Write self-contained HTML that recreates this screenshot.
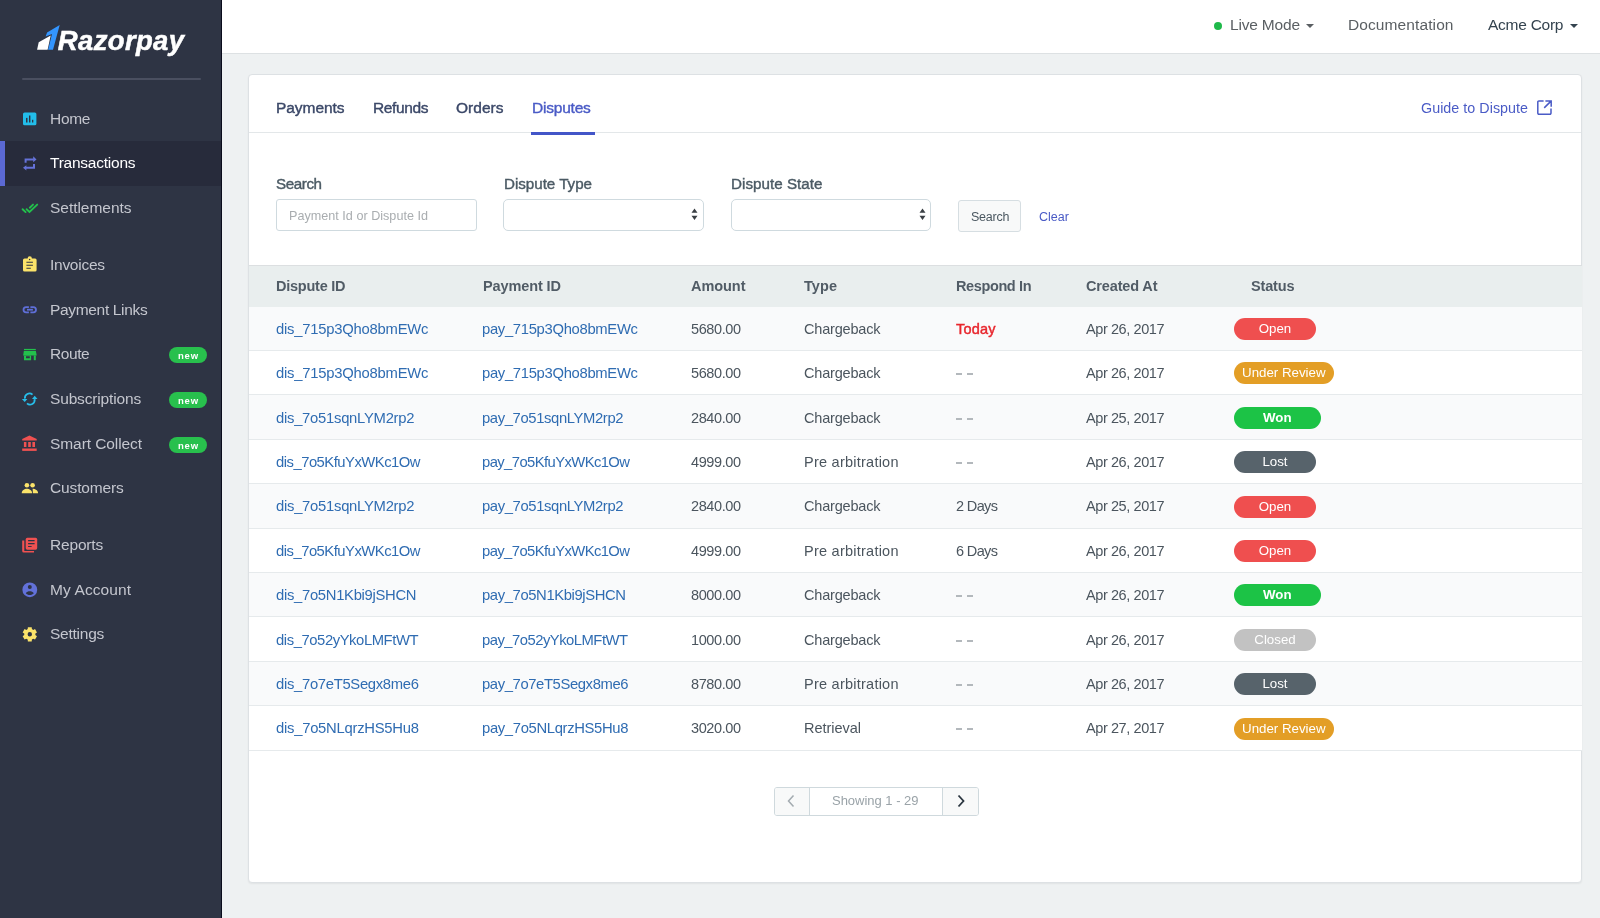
<!DOCTYPE html>
<html><head><meta charset="utf-8">
<style>
*{margin:0;padding:0;box-sizing:border-box}
html,body{width:1600px;height:918px;overflow:hidden}
body{background:#eef1f2;font-family:"Liberation Sans",sans-serif;position:relative}
.a{position:absolute;white-space:nowrap;line-height:normal;will-change:transform}
#side{position:absolute;left:0;top:0;width:222px;height:918px;background:#2e3444;border-right:1px solid #0a0c1c}
.logo{position:absolute;left:0;top:0}
.sep{position:absolute;left:22px;top:78px;width:179px;height:2px;border-radius:1px;background:#4a4f60}
.act{position:absolute;left:0;top:140.8px;width:221px;height:45px;background:#272b3b}
.actb{position:absolute;left:0;top:140.8px;width:5px;height:45px;background:#5b69d3}
.si{color:#c4c6ce}
.new{will-change:transform;position:absolute;left:169px;width:38px;height:16.2px;border-radius:8.1px;background:#28c04d;color:#fff;font-size:9.5px;font-weight:700;letter-spacing:0.8px;text-indent:0.8px;text-align:center;line-height:18.5px}
#head{position:absolute;left:222px;top:0;width:1378px;height:54px;background:#fff;border-bottom:1px solid #dde1e3}
.hd{color:#5a5f63}
.dot{position:absolute;left:1213.5px;top:21.7px;width:8.6px;height:8.6px;border-radius:50%;background:#1fb94a}
.caret{position:absolute;width:0;height:0;border-left:4px solid transparent;border-right:4px solid transparent;border-top:4.5px solid #5a5f63}
.card{position:absolute;left:248px;top:73.5px;width:1334px;height:809.5px;background:#fff;border:1px solid #dde1e4;border-radius:4px;box-shadow:0 1px 2px rgba(0,0,0,0.06)}
.tabline{position:absolute;left:249px;top:132px;width:1332px;height:1px;background:#e3e7e9}
.uline{position:absolute;left:531px;top:132px;width:64px;height:3px;background:#4356c8}
.tab{color:#3b4868;-webkit-text-stroke:0.4px currentColor}
.guide{color:#4a5bc6}
.lbl{color:#4b5a64;-webkit-text-stroke:0.4px currentColor}
.inp{position:absolute;top:198.5px;height:32.5px;border:1px solid #cfdadf;border-radius:3px;background:#fff}
.ph{color:#a9adb0}
.btn{position:absolute;left:958px;top:199.5px;width:63px;height:32px;border:1px solid #d6dee2;border-radius:3px;background:#f8f9f9}
.btxt{color:#4b5861}
.clr{color:#4a5bc6}
.thead{position:absolute;left:249px;top:265px;width:1333px;height:41.6px;background:#e9eeee;border-top:1px solid #dcdfe1}
.th{color:#515c66;font-weight:700}
.row{position:absolute;left:249px;width:1333px;height:44.4px;border-bottom:1px solid #e6eaec}
.lnk{color:#2f6cb2}
.txt{color:#4b555e}
.dash{position:absolute;width:6px;height:2px;background:#b3b8bc}
.badge{will-change:transform;position:absolute;left:1233.5px;height:21.8px;border-radius:11px;color:#fff;font-size:13.3px;text-align:center;line-height:22px}
.pag{position:absolute;left:773.5px;top:787px;width:205px;height:28.5px;border:1px solid #cfd9dd;border-radius:3px;background:#fff;overflow:hidden}
.pl{position:absolute;left:0;top:0;width:35px;height:100%;background:#f8f9f9;border-right:1px solid #cfd9dd}
.pr{position:absolute;right:0;top:0;width:35.5px;height:100%;background:#f8f9f9;border-left:1px solid #cfd9dd}
.pgt{color:#9aa3a8}
</style></head><body>
<div id="side">
<svg class="logo" style="will-change:transform" width="222" height="70" viewBox="0 0 222 70">
<polygon points="37.1,49.8 38.7,42.3 50.7,35.4 47.6,49.8" fill="#fff"/>
<polygon points="45.6,36.4 47.1,32.5 59.7,25.1 53,49.8 48.1,49.8 52,34.1" fill="#3395ff"/>
<text x="57.8" y="49.5" font-family="Liberation Sans" font-size="27.5" font-weight="700" font-style="italic" letter-spacing="0.35" fill="#fff" stroke="#fff" stroke-width="0.5">Razorpay</text>
</svg>
<div class="sep"></div>
<div class="act"></div><div class="actb"></div>
<div class="a si" style="left:50px;top:110.00px;font-size:15.5px;letter-spacing:-0.286px;">Home</div>
<div class="a si" style="left:50px;top:154.00px;font-size:15.5px;color:#fff;letter-spacing:-0.241px;">Transactions</div>
<div class="a si" style="left:50px;top:199.00px;font-size:15.5px;letter-spacing:-0.036px;">Settlements</div>
<div class="a si" style="left:50px;top:256.00px;font-size:15.5px;letter-spacing:-0.268px;">Invoices</div>
<div class="a si" style="left:50px;top:301.00px;font-size:15.5px;letter-spacing:-0.331px;">Payment Links</div>
<div class="a si" style="left:50px;top:345.00px;font-size:15.5px;letter-spacing:-0.419px;">Route</div>
<div class="a si" style="left:50px;top:390.00px;font-size:15.5px;letter-spacing:-0.154px;">Subscriptions</div>
<div class="a si" style="left:50px;top:435.00px;font-size:15.5px;letter-spacing:-0.078px;">Smart Collect</div>
<div class="a si" style="left:50px;top:479.00px;font-size:15.5px;letter-spacing:-0.142px;">Customers</div>
<div class="a si" style="left:50px;top:536.00px;font-size:15.5px;letter-spacing:-0.180px;">Reports</div>
<div class="a si" style="left:50px;top:581.00px;font-size:15.5px;letter-spacing:0.108px;">My Account</div>
<div class="a si" style="left:50px;top:625.00px;font-size:15.5px;letter-spacing:-0.245px;">Settings</div>
<div class="new" style="top:346.7px">new</div>
<div class="new" style="top:391.7px">new</div>
<div class="new" style="top:436.5px">new</div>
<svg class="a" style="left:0;top:0" width="222" height="700" viewBox="0 0 222 700">
<!-- home -->
<rect x="23" y="112.4" width="13.4" height="12.9" rx="1.6" fill="#22bdea"/>
<rect x="26" y="117.9" width="1.5" height="4.6" fill="#2e3444"/>
<rect x="29" y="115.5" width="1.4" height="7" fill="#2e3444"/>
<rect x="32" y="119.8" width="1.3" height="2.7" fill="#2e3444"/>
<!-- transactions -->
<g fill="none" stroke="#6572d8" stroke-width="2">
<path d="M25.6 162.8V159.4H33.8"/>
<path d="M34 164V167.8H25.6"/>
</g>
<path d="M33.2 156.3L36.5 159.4L33.2 162.3Z" fill="#6572d8"/>
<path d="M26.4 165.2L23 167.8L26.4 170.5Z" fill="#6572d8"/>
<!-- settlements -->
<g fill="none" stroke="#23c04c" stroke-width="1.9" stroke-linecap="round">
<path d="M22.6 209.2L25.6 212.1"/>
<path d="M26.6 209.2L29.5 212L37.2 204.6"/>
<path d="M29.8 207.7L33 204.6"/>
</g>
<!-- invoices -->
<path d="M24.5 258.4H27.6A2 2 0 0 1 31.9 258.4H35.1A1.5 1.5 0 0 1 36.6 259.9V270.1A1.5 1.5 0 0 1 35.1 271.6H24.5A1.5 1.5 0 0 1 23 270.1V259.9A1.5 1.5 0 0 1 24.5 258.4Z" fill="#fbe36a"/>
<circle cx="29.6" cy="259.5" r="0.75" fill="#2e3444"/>
<g stroke="#2e3444" stroke-width="1.1"><path d="M26.4 262.3H32.9M26.4 265.3H32.9M26.4 268.3H30.8"/></g>
<!-- payment links -->
<g fill="none" stroke="#5f6fd8" stroke-width="1.8">
<path d="M28.9 307.1H26.1A2.6 2.6 0 0 0 26.1 312.3H28.9"/>
<path d="M30.4 307.1H33.4A2.6 2.6 0 0 1 33.4 312.3H30.4"/>
<path d="M27 309.7H32.9"/>
</g>
<!-- route -->
<rect x="24" y="348.9" width="11.8" height="1.3" fill="#23c04c"/>
<path d="M23.9 351H35.9L36.7 355.6H23.1Z" fill="#23c04c"/>
<path d="M24 355.4H31.1V360.2H24ZM26 356.2V358.3H29.8V356.2Z" fill="#23c04c" fill-rule="evenodd"/>
<rect x="33.8" y="355.4" width="2" height="4.8" fill="#23c04c"/>
<!-- subscriptions -->
<g fill="none" stroke="#27bde9" stroke-width="1.8">
<path d="M32.5 394.6A4.6 4.6 0 0 0 24.9 398.6"/>
<path d="M27 403.4A4.6 4.6 0 0 0 34.6 399.2"/>
</g>
<path d="M21.9 398.9H27.4L24.7 401.9Z" fill="#27bde9"/>
<path d="M32 398.9H37.5L34.7 395.8Z" fill="#27bde9"/>
<!-- smart collect -->
<path d="M22.2 440.5V439.1L29.4 435.6L36.7 439.1V440.5Z" fill="#f05151"/>
<rect x="23.9" y="442" width="2.5" height="5" fill="#f05151"/>
<rect x="28.2" y="442" width="2.6" height="5" fill="#f05151"/>
<rect x="32.4" y="442" width="2.6" height="5" fill="#f05151"/>
<rect x="22.2" y="448.5" width="14.5" height="2.4" fill="#f05151"/>
<!-- customers -->
<circle cx="26.9" cy="485.3" r="2.3" fill="#fbe36a"/>
<circle cx="32.6" cy="485.3" r="2.3" fill="#fbe36a"/>
<path d="M21.7 493.2C21.7 490.5 24.5 488.8 26.9 488.8C29.3 488.8 32.1 490.5 32.1 493.2Z" fill="#fbe36a"/>
<path d="M32.6 488.8C35.3 488.8 38.1 490.5 38.1 493.2H32.9C32.9 491.6 32.6 490 32.6 488.8Z" fill="#fbe36a"/>
<!-- reports -->
<rect x="25.7" y="537.8" width="11.5" height="11.9" rx="1.6" fill="#f05151"/>
<g stroke="#2e3444" stroke-width="1.1"><path d="M28.1 540.6H34.6M28.1 543.6H34.6M28.1 546.5H31.6"/></g>
<path d="M22.2 540.6H24.3V550.9H34V552.5H23.7A1.5 1.5 0 0 1 22.2 551Z" fill="#f05151"/>
<!-- my account -->
<path d="M29.8 582.4A7.4 7.4 0 1 1 29.8 597.2A7.4 7.4 0 1 1 29.8 582.4ZM29.8 584.9A2 2 0 1 0 29.8 588.9A2 2 0 1 0 29.8 584.9ZM25.8 593.2C26.8 594.4 28.2 595.0 29.8 595.0C31.4 595.0 32.8 594.4 33.8 593.2C32.8 591.8 31.4 591.2 29.8 591.2C28.2 591.2 26.8 591.8 25.8 593.2Z" fill="#6271d9" fill-rule="evenodd"/>
<!-- settings -->
<path fill="#fbe36a" fill-rule="evenodd" d="M27.70 629.11 L27.88 627.15 L31.72 627.15 L31.90 629.11 L33.25 629.89 L35.03 629.07 L36.95 632.38 L35.35 633.52 L35.35 635.08 L36.95 636.22 L35.03 639.53 L33.25 638.71 L31.90 639.49 L31.72 641.45 L27.88 641.45 L27.70 639.49 L26.35 638.71 L24.57 639.53 L22.65 636.22 L24.25 635.08 L24.25 633.52 L22.65 632.38 L24.57 629.07 L26.35 629.89Z M29.8 632.0999999999999 A2.2 2.2 0 1 0 29.8 636.5 A2.2 2.2 0 1 0 29.8 632.0999999999999Z"/>
</svg>
</div>
<div id="head"></div>
<div class="dot"></div>
<div class="a hd" style="left:1229.8px;top:16.00px;font-size:15.5px;letter-spacing:-0.189px;">Live Mode</div>
<div class="caret" style="left:1306px;top:24px"></div>
<div class="a hd" style="left:1348.3px;top:16.00px;font-size:15.5px;letter-spacing:0.103px;">Documentation</div>
<div class="a hd" style="left:1487.5px;top:16.00px;font-size:15.5px;color:#34434f;letter-spacing:-0.254px;">Acme Corp</div>
<div class="caret" style="left:1569.5px;top:24px;border-top-color:#34434f"></div>
<div class="card"></div>
<div class="tabline"></div>
<div class="a tab" style="left:276.25px;top:99.00px;font-size:15.5px;letter-spacing:-0.060px;">Payments</div>
<div class="a tab" style="left:372.5px;top:99.00px;font-size:15.5px;letter-spacing:-0.372px;">Refunds</div>
<div class="a tab" style="left:455.75px;top:99.00px;font-size:15.5px;letter-spacing:0.025px;">Orders</div>
<div class="a tab" style="left:532px;top:99.00px;font-size:15.5px;color:#4a5bc6;letter-spacing:-0.216px;">Disputes</div>
<div class="uline"></div>
<div class="a guide" style="left:1421px;top:100.00px;font-size:14.3px;letter-spacing:0.033px;">Guide to Dispute</div>
<svg class="a" style="left:1536px;top:99px" width="17" height="17" viewBox="0 0 17 17"><path d="M7.6 2H2.9A1.1 1.1 0 0 0 1.8 3.1V14.1A1.1 1.1 0 0 0 2.9 15.2H13.9A1.1 1.1 0 0 0 15 14.1V9.4" fill="none" stroke="#4a5bc6" stroke-width="1.5"/><path d="M9.4 1.9H15.2V7.7M15 2.1L8.2 8.9" fill="none" stroke="#4a5bc6" stroke-width="1.5"/></svg>
<div class="a lbl" style="left:276.2px;top:175.00px;font-size:15.2px;letter-spacing:-0.425px;">Search</div>
<div class="a lbl" style="left:504.25px;top:175.00px;font-size:15.2px;letter-spacing:-0.034px;">Dispute Type</div>
<div class="a lbl" style="left:731px;top:175.00px;font-size:15.2px;letter-spacing:0.026px;">Dispute State</div>
<div class="inp" style="left:275.5px;width:201px"></div>
<div class="a ph" style="left:288.5px;top:209.00px;font-size:12.6px;letter-spacing:0.017px;">Payment Id or Dispute Id</div>
<div class="inp" style="left:503px;width:201px;border-radius:5px"></div>
<div class="inp" style="left:730.5px;width:200.5px;border-radius:5px"></div>
<svg class="a" style="left:691px;top:207.5px" width="7" height="13" viewBox="0 0 7 13"><path d="M3.5 0.5L6.5 4.8H0.5Z M3.5 12L6.5 7.7H0.5Z" fill="#3a3f44"/></svg>
<svg class="a" style="left:918.5px;top:207.5px" width="7" height="13" viewBox="0 0 7 13"><path d="M3.5 0.5L6.5 4.8H0.5Z M3.5 12L6.5 7.7H0.5Z" fill="#3a3f44"/></svg>
<div class="btn"></div>
<div class="a btxt" style="left:970.7px;top:210.00px;font-size:12.5px;letter-spacing:-0.222px;">Search</div>
<div class="a clr" style="left:1038.7px;top:210.00px;font-size:12.5px;letter-spacing:0.031px;">Clear</div>
<div class="thead"></div>
<div class="a th" style="left:276.3px;top:278.00px;font-size:14.5px;letter-spacing:-0.245px;">Dispute ID</div>
<div class="a th" style="left:483px;top:278.00px;font-size:14.5px;letter-spacing:-0.109px;">Payment ID</div>
<div class="a th" style="left:691.25px;top:278.00px;font-size:14.5px;letter-spacing:-0.053px;">Amount</div>
<div class="a th" style="left:803.75px;top:278.00px;font-size:14.5px;letter-spacing:0.073px;">Type</div>
<div class="a th" style="left:956.25px;top:278.00px;font-size:14.5px;letter-spacing:-0.384px;">Respond In</div>
<div class="a th" style="left:1086.25px;top:278.00px;font-size:14.5px;letter-spacing:-0.144px;">Created At</div>
<div class="a th" style="left:1250.75px;top:278.00px;font-size:14.5px;letter-spacing:-0.166px;">Status</div>
<div class="row" style="top:306.60px;background:#f9fafb"></div>
<div class="a lnk" style="left:275.5px;top:321.00px;font-size:14.8px;letter-spacing:-0.222px;">dis_715p3Qho8bmEWc</div>
<div class="a lnk" style="left:482px;top:321.00px;font-size:14.8px;letter-spacing:-0.308px;">pay_715p3Qho8bmEWc</div>
<div class="a txt" style="left:691.25px;top:321.00px;font-size:14.5px;letter-spacing:-0.404px;">5680.00</div>
<div class="a txt" style="left:803.75px;top:321.00px;font-size:14.5px;letter-spacing:-0.188px;">Chargeback</div>
<div class="a txt" style="left:956.25px;top:321.00px;font-size:14.5px;color:#e8262d;-webkit-text-stroke:0.45px currentColor;letter-spacing:0.199px;">Today</div>
<div class="a txt" style="left:1085.6px;top:321.00px;font-size:14.5px;letter-spacing:-0.413px;">Apr 26, 2017</div>
<div class="badge" style="top:317.90px;width:82px;background:#ef4f4f;">Open</div>
<div class="row" style="top:351.00px;background:#fff"></div>
<div class="a lnk" style="left:275.5px;top:365.00px;font-size:14.8px;letter-spacing:-0.222px;">dis_715p3Qho8bmEWc</div>
<div class="a lnk" style="left:482px;top:365.00px;font-size:14.8px;letter-spacing:-0.308px;">pay_715p3Qho8bmEWc</div>
<div class="a txt" style="left:691.25px;top:365.00px;font-size:14.5px;letter-spacing:-0.404px;">5680.00</div>
<div class="a txt" style="left:803.75px;top:365.00px;font-size:14.5px;letter-spacing:-0.188px;">Chargeback</div>
<div class="dash" style="left:956px;top:373px"></div><div class="dash" style="left:967px;top:373px"></div>
<div class="a txt" style="left:1085.6px;top:365.00px;font-size:14.5px;letter-spacing:-0.413px;">Apr 26, 2017</div>
<div class="badge" style="top:362.30px;width:99.6px;background:#e39e26;">Under Review</div>
<div class="row" style="top:395.40px;background:#f9fafb"></div>
<div class="a lnk" style="left:275.5px;top:410.00px;font-size:14.8px;letter-spacing:-0.257px;">dis_7o51sqnLYM2rp2</div>
<div class="a lnk" style="left:482px;top:410.00px;font-size:14.8px;letter-spacing:-0.371px;">pay_7o51sqnLYM2rp2</div>
<div class="a txt" style="left:691.25px;top:410.00px;font-size:14.5px;letter-spacing:-0.404px;">2840.00</div>
<div class="a txt" style="left:803.75px;top:410.00px;font-size:14.5px;letter-spacing:-0.188px;">Chargeback</div>
<div class="dash" style="left:956px;top:418px"></div><div class="dash" style="left:967px;top:418px"></div>
<div class="a txt" style="left:1085.6px;top:410.00px;font-size:14.5px;letter-spacing:-0.413px;">Apr 25, 2017</div>
<div class="badge" style="top:406.70px;width:86.5px;background:#1cc346;font-weight:700;">Won</div>
<div class="row" style="top:439.80px;background:#fff"></div>
<div class="a lnk" style="left:275.5px;top:454.00px;font-size:14.8px;letter-spacing:-0.498px;">dis_7o5KfuYxWKc1Ow</div>
<div class="a lnk" style="left:482px;top:454.00px;font-size:14.8px;letter-spacing:-0.584px;">pay_7o5KfuYxWKc1Ow</div>
<div class="a txt" style="left:691.25px;top:454.00px;font-size:14.5px;letter-spacing:-0.404px;">4999.00</div>
<div class="a txt" style="left:803.75px;top:454.00px;font-size:14.5px;letter-spacing:0.244px;">Pre arbitration</div>
<div class="dash" style="left:956px;top:462px"></div><div class="dash" style="left:967px;top:462px"></div>
<div class="a txt" style="left:1085.6px;top:454.00px;font-size:14.5px;letter-spacing:-0.413px;">Apr 26, 2017</div>
<div class="badge" style="top:451.10px;width:82px;background:#57636b;">Lost</div>
<div class="row" style="top:484.20px;background:#f9fafb"></div>
<div class="a lnk" style="left:275.5px;top:498.00px;font-size:14.8px;letter-spacing:-0.257px;">dis_7o51sqnLYM2rp2</div>
<div class="a lnk" style="left:482px;top:498.00px;font-size:14.8px;letter-spacing:-0.371px;">pay_7o51sqnLYM2rp2</div>
<div class="a txt" style="left:691.25px;top:498.00px;font-size:14.5px;letter-spacing:-0.404px;">2840.00</div>
<div class="a txt" style="left:803.75px;top:498.00px;font-size:14.5px;letter-spacing:-0.188px;">Chargeback</div>
<div class="a txt" style="left:956.25px;top:498.00px;font-size:14.5px;letter-spacing:-0.628px;">2 Days</div>
<div class="a txt" style="left:1085.6px;top:498.00px;font-size:14.5px;letter-spacing:-0.413px;">Apr 25, 2017</div>
<div class="badge" style="top:495.50px;width:82px;background:#ef4f4f;">Open</div>
<div class="row" style="top:528.60px;background:#fff"></div>
<div class="a lnk" style="left:275.5px;top:543.00px;font-size:14.8px;letter-spacing:-0.498px;">dis_7o5KfuYxWKc1Ow</div>
<div class="a lnk" style="left:482px;top:543.00px;font-size:14.8px;letter-spacing:-0.584px;">pay_7o5KfuYxWKc1Ow</div>
<div class="a txt" style="left:691.25px;top:543.00px;font-size:14.5px;letter-spacing:-0.404px;">4999.00</div>
<div class="a txt" style="left:803.75px;top:543.00px;font-size:14.5px;letter-spacing:0.244px;">Pre arbitration</div>
<div class="a txt" style="left:956.25px;top:543.00px;font-size:14.5px;letter-spacing:-0.628px;">6 Days</div>
<div class="a txt" style="left:1085.6px;top:543.00px;font-size:14.5px;letter-spacing:-0.413px;">Apr 26, 2017</div>
<div class="badge" style="top:539.90px;width:82px;background:#ef4f4f;">Open</div>
<div class="row" style="top:573.00px;background:#f9fafb"></div>
<div class="a lnk" style="left:275.5px;top:587.00px;font-size:14.8px;letter-spacing:-0.299px;">dis_7o5N1Kbi9jSHCN</div>
<div class="a lnk" style="left:482px;top:587.00px;font-size:14.8px;letter-spacing:-0.384px;">pay_7o5N1Kbi9jSHCN</div>
<div class="a txt" style="left:691.25px;top:587.00px;font-size:14.5px;letter-spacing:-0.404px;">8000.00</div>
<div class="a txt" style="left:803.75px;top:587.00px;font-size:14.5px;letter-spacing:-0.188px;">Chargeback</div>
<div class="dash" style="left:956px;top:595px"></div><div class="dash" style="left:967px;top:595px"></div>
<div class="a txt" style="left:1085.6px;top:587.00px;font-size:14.5px;letter-spacing:-0.413px;">Apr 26, 2017</div>
<div class="badge" style="top:584.30px;width:86.5px;background:#1cc346;font-weight:700;">Won</div>
<div class="row" style="top:617.40px;background:#fff"></div>
<div class="a lnk" style="left:275.5px;top:632.00px;font-size:14.8px;letter-spacing:-0.422px;">dis_7o52yYkoLMFtWT</div>
<div class="a lnk" style="left:482px;top:632.00px;font-size:14.8px;letter-spacing:-0.506px;">pay_7o52yYkoLMFtWT</div>
<div class="a txt" style="left:691.25px;top:632.00px;font-size:14.5px;letter-spacing:-0.404px;">1000.00</div>
<div class="a txt" style="left:803.75px;top:632.00px;font-size:14.5px;letter-spacing:-0.188px;">Chargeback</div>
<div class="dash" style="left:956px;top:640px"></div><div class="dash" style="left:967px;top:640px"></div>
<div class="a txt" style="left:1085.6px;top:632.00px;font-size:14.5px;letter-spacing:-0.413px;">Apr 26, 2017</div>
<div class="badge" style="top:628.70px;width:82px;background:#c2c2c2;">Closed</div>
<div class="row" style="top:661.80px;background:#f9fafb"></div>
<div class="a lnk" style="left:275.5px;top:676.00px;font-size:14.8px;letter-spacing:-0.299px;">dis_7o7eT5Segx8me6</div>
<div class="a lnk" style="left:482px;top:676.00px;font-size:14.8px;letter-spacing:-0.383px;">pay_7o7eT5Segx8me6</div>
<div class="a txt" style="left:691.25px;top:676.00px;font-size:14.5px;letter-spacing:-0.404px;">8780.00</div>
<div class="a txt" style="left:803.75px;top:676.00px;font-size:14.5px;letter-spacing:0.244px;">Pre arbitration</div>
<div class="dash" style="left:956px;top:684px"></div><div class="dash" style="left:967px;top:684px"></div>
<div class="a txt" style="left:1085.6px;top:676.00px;font-size:14.5px;letter-spacing:-0.413px;">Apr 26, 2017</div>
<div class="badge" style="top:673.10px;width:82px;background:#57636b;">Lost</div>
<div class="row" style="top:706.20px;background:#fff"></div>
<div class="a lnk" style="left:275.5px;top:720.00px;font-size:14.8px;letter-spacing:-0.249px;">dis_7o5NLqrzHS5Hu8</div>
<div class="a lnk" style="left:482px;top:720.00px;font-size:14.8px;letter-spacing:-0.335px;">pay_7o5NLqrzHS5Hu8</div>
<div class="a txt" style="left:691.25px;top:720.00px;font-size:14.5px;letter-spacing:-0.404px;">3020.00</div>
<div class="a txt" style="left:803.75px;top:720.00px;font-size:14.5px;letter-spacing:-0.027px;">Retrieval</div>
<div class="dash" style="left:956px;top:728px"></div><div class="dash" style="left:967px;top:728px"></div>
<div class="a txt" style="left:1085.6px;top:720.00px;font-size:14.5px;letter-spacing:-0.413px;">Apr 27, 2017</div>
<div class="badge" style="top:717.50px;width:99.6px;background:#e39e26;">Under Review</div>
<div class="pag"><div class="pl"></div><div class="pr"></div></div>
<div class="a pgt" style="left:832.4px;top:793.00px;font-size:13px;letter-spacing:-0.018px;">Showing 1 - 29</div>
<svg class="a" style="left:786px;top:794px" width="10" height="14" viewBox="0 0 10 14"><path d="M7.5 1.5L2.5 7L7.5 12.5" fill="none" stroke="#a3abb0" stroke-width="1.5"/></svg>
<svg class="a" style="left:956px;top:794px" width="10" height="14" viewBox="0 0 10 14"><path d="M2.5 1.5L7.5 7L2.5 12.5" fill="none" stroke="#2b3640" stroke-width="1.8"/></svg>
</body></html>
